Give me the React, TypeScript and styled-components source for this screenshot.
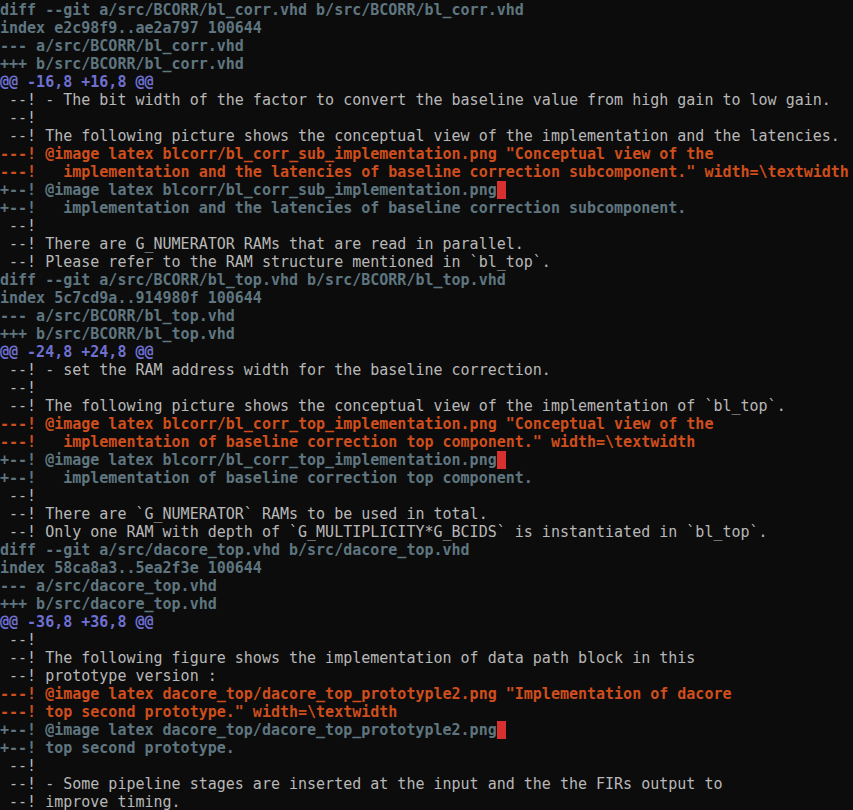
import React from "react";
import styled, { createGlobalStyle } from "styled-components";

const Global = createGlobalStyle`
  html, body { margin: 0; padding: 0; background: #0c0c0c; }
  body { overflow: hidden; }
`;

type Kind = "meta" | "hunk" | "ctx" | "del" | "add";

const colors: Record<Kind, string> = {
  meta: "#5f7680",
  hunk: "#6f70d2",
  ctx: "#b8b8b8",
  del: "#cf4e1c",
  add: "#5f7680",
};

const Terminal = styled.div`
  width: 853px;
  height: 810px;
  box-sizing: border-box;
  padding-top: 1px;
  background: #0c0c0c;
  overflow: hidden;
  font-family: "DejaVu Sans Mono", "Liberation Mono", monospace;
  font-size: 15px;
  line-height: 18px;
  display: flex;
  flex-direction: column;
`;

const Line = styled.div<{ $kind: Kind }>`
  height: 18px;
  flex-shrink: 0;
  white-space: pre;
  overflow: hidden;
  color: ${(p) => colors[p.$kind]};
  font-weight: ${(p) => (p.$kind === "ctx" ? 400 : 700)};
  display: flex;
  align-items: center;
`;

const Cursor = styled.span`
  display: inline-block;
  width: 9px;
  height: 18px;
  background: #d8302f;
`;

const lines: [Kind, string, boolean?][] = [
  ["meta", "diff --git a/src/BCORR/bl_corr.vhd b/src/BCORR/bl_corr.vhd"],
  ["meta", "index e2c98f9..ae2a797 100644"],
  ["meta", "--- a/src/BCORR/bl_corr.vhd"],
  ["meta", "+++ b/src/BCORR/bl_corr.vhd"],
  ["hunk", "@@ -16,8 +16,8 @@"],
  ["ctx", " --! - The bit width of the factor to convert the baseline value from high gain to low gain."],
  ["ctx", " --!"],
  ["ctx", " --! The following picture shows the conceptual view of the implementation and the latencies."],
  ["del", "---! @image latex blcorr/bl_corr_sub_implementation.png \"Conceptual view of the"],
  ["del", "---!   implementation and the latencies of baseline correction subcomponent.\" width=\\textwidth"],
  ["add", "+--! @image latex blcorr/bl_corr_sub_implementation.png", true],
  ["add", "+--!   implementation and the latencies of baseline correction subcomponent."],
  ["ctx", " --!"],
  ["ctx", " --! There are G_NUMERATOR RAMs that are read in parallel."],
  ["ctx", " --! Please refer to the RAM structure mentioned in `bl_top`."],
  ["meta", "diff --git a/src/BCORR/bl_top.vhd b/src/BCORR/bl_top.vhd"],
  ["meta", "index 5c7cd9a..914980f 100644"],
  ["meta", "--- a/src/BCORR/bl_top.vhd"],
  ["meta", "+++ b/src/BCORR/bl_top.vhd"],
  ["hunk", "@@ -24,8 +24,8 @@"],
  ["ctx", " --! - set the RAM address width for the baseline correction."],
  ["ctx", " --!"],
  ["ctx", " --! The following picture shows the conceptual view of the implementation of `bl_top`."],
  ["del", "---! @image latex blcorr/bl_corr_top_implementation.png \"Conceptual view of the"],
  ["del", "---!   implementation of baseline correction top component.\" width=\\textwidth"],
  ["add", "+--! @image latex blcorr/bl_corr_top_implementation.png", true],
  ["add", "+--!   implementation of baseline correction top component."],
  ["ctx", " --!"],
  ["ctx", " --! There are `G_NUMERATOR` RAMs to be used in total."],
  ["ctx", " --! Only one RAM with depth of `G_MULTIPLICITY*G_BCIDS` is instantiated in `bl_top`."],
  ["meta", "diff --git a/src/dacore_top.vhd b/src/dacore_top.vhd"],
  ["meta", "index 58ca8a3..5ea2f3e 100644"],
  ["meta", "--- a/src/dacore_top.vhd"],
  ["meta", "+++ b/src/dacore_top.vhd"],
  ["hunk", "@@ -36,8 +36,8 @@"],
  ["ctx", " --!"],
  ["ctx", " --! The following figure shows the implementation of data path block in this"],
  ["ctx", " --! prototype version :"],
  ["del", "---! @image latex dacore_top/dacore_top_prototyple2.png \"Implementation of dacore"],
  ["del", "---! top second prototype.\" width=\\textwidth"],
  ["add", "+--! @image latex dacore_top/dacore_top_prototyple2.png", true],
  ["add", "+--! top second prototype."],
  ["ctx", " --!"],
  ["ctx", " --! - Some pipeline stages are inserted at the input and the the FIRs output to"],
  ["ctx", " --! improve timing."],
];

export default function App() {
  return (
    <>
      <Global />
      <Terminal>
        {lines.map(([kind, text, cursor], i) => (
          <Line key={i} $kind={kind}>
            {text}
            {cursor && <Cursor />}
          </Line>
        ))}
      </Terminal>
    </>
  );
}
